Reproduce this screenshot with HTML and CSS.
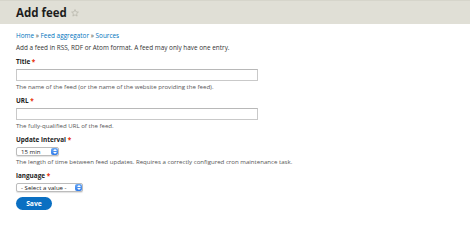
FILE: index.html
```html
<!DOCTYPE html>
<html>
<head>
    <title>Add feed</title>
    <link rel="stylesheet" href="styles.css">
</head>
<body>
    <div class="page-header">
        <h1>Add feed</h1>
        <svg class="star" width="8" height="8" viewBox="0 0 20 20">
            <path d="M10 1.5l2.5 5.6 6 .6-4.5 4 1.3 6-5.3-3.1-5.3 3.1 1.3-6-4.5-4 6-.6z" fill="none" stroke="#b0afa3" stroke-width="1.6" stroke-linejoin="round"/>
        </svg>
    </div>

    <div class="content">
        <div class="breadcrumb">
            <a href="#">Home</a> &raquo; <a href="#">Feed aggregator</a> &raquo; <a href="#">Sources</a>
        </div>
        <p class="intro">Add a feed in RSS, RDF or Atom format. A feed may only have one entry.</p>

        <div class="form-item">
            <label>Title <span class="req">*</span></label>
            <input type="text" class="text-input">
            <div class="description">The name of the feed (or the name of the website providing the feed).</div>
        </div>

        <div class="form-item">
            <label>URL <span class="req">*</span></label>
            <input type="text" class="text-input">
            <div class="description">The fully-qualified URL of the feed.</div>
        </div>

        <div class="form-item">
            <label>Update interval <span class="req">*</span></label>
            <div class="select select-interval">
                <span class="select-value">15 min</span>
                <span class="select-arrow"></span>
            </div>
            <div class="description">The length of time between feed updates. Requires a correctly configured cron maintenance task.</div>
        </div>

        <div class="form-item">
            <label>language <span class="req">*</span></label>
            <div class="select select-language">
                <span class="select-value">- Select a value -</span>
                <span class="select-arrow"></span>
            </div>
        </div>

        <button class="save-btn">Save</button>
    </div>
</body>
</html>
```

FILE: styles.css
```css
* {
    box-sizing: border-box;
}

body {
    margin: 0;
    background-color: #ffffff;
    font-family: 'Open Sans', 'DejaVu Sans', sans-serif;
    font-size: 6.4px;
    color: #333333;
}

.page-header {
    display: flex;
    align-items: center;
    height: 24px;
    padding-left: 16px;
    margin-right: 4px;
    background-color: #e0dfd6;
    border-top: 1px solid #d6d5cb;
}

.page-header h1 {
    margin: 0;
    font-size: 11.5px;
    font-weight: 700;
    color: #1d1d1d;
}

.star {
    margin-left: 4px;
}

.content {
    padding: 7px 16px 0;
}

.breadcrumb {
    line-height: 10px;
    margin-bottom: 2px;
}

.breadcrumb a {
    color: #0074bd;
    text-decoration: none;
}

.intro {
    margin: 0 0 4px;
    line-height: 10px;
}

.form-item {
    margin-bottom: 4px;
}

.form-item label {
    display: block;
    font-weight: 700;
    line-height: 10px;
    margin-bottom: 2px;
    color: #222222;
}

.req {
    color: #e62600;
}

.text-input {
    display: block;
    width: 242px;
    height: 12px;
    margin: 0;
    padding: 0;
    border: 1px solid #c9c9c9;
    border-top-color: #b8b8b8;
    background-color: #ffffff;
}

.description {
    line-height: 10px;
    margin-top: 1px;
    color: #555555;
    font-size: 6.1px;
}

.select {
    display: flex;
    align-items: center;
    height: 9px;
    border: 1px solid #bcbcbc;
    border-radius: 2px;
    background-color: #ffffff;
    box-shadow: 0 1px 1px rgba(0, 0, 0, 0.12);
}

.select-interval {
    width: 43px;
}

.select-language {
    width: 67px;
}

.select-value {
    flex: 1;
    padding-left: 4px;
    font-size: 6.1px;
    line-height: 7px;
    color: #222222;
}

.select-arrow {
    position: relative;
    width: 7px;
    height: 7px;
    border-radius: 2px;
    background: linear-gradient(#6ba9f5, #2f7ae8);
}

.select-arrow::before,
.select-arrow::after {
    content: "";
    position: absolute;
    left: 1.5px;
    border-left: 2px solid transparent;
    border-right: 2px solid transparent;
}

.select-arrow::before {
    top: 1px;
    border-bottom: 2px solid #ffffff;
}

.select-arrow::after {
    bottom: 1px;
    border-top: 2px solid #ffffff;
}

.save-btn {
    display: block;
    margin-top: 5px;
    width: 36px;
    height: 13px;
    padding: 0;
    border: none;
    border-radius: 7px;
    background-color: #0a6fc2;
    color: #ffffff;
    font-family: 'Open Sans', 'DejaVu Sans', sans-serif;
    font-size: 6.8px;
    font-weight: 700;
}
```
